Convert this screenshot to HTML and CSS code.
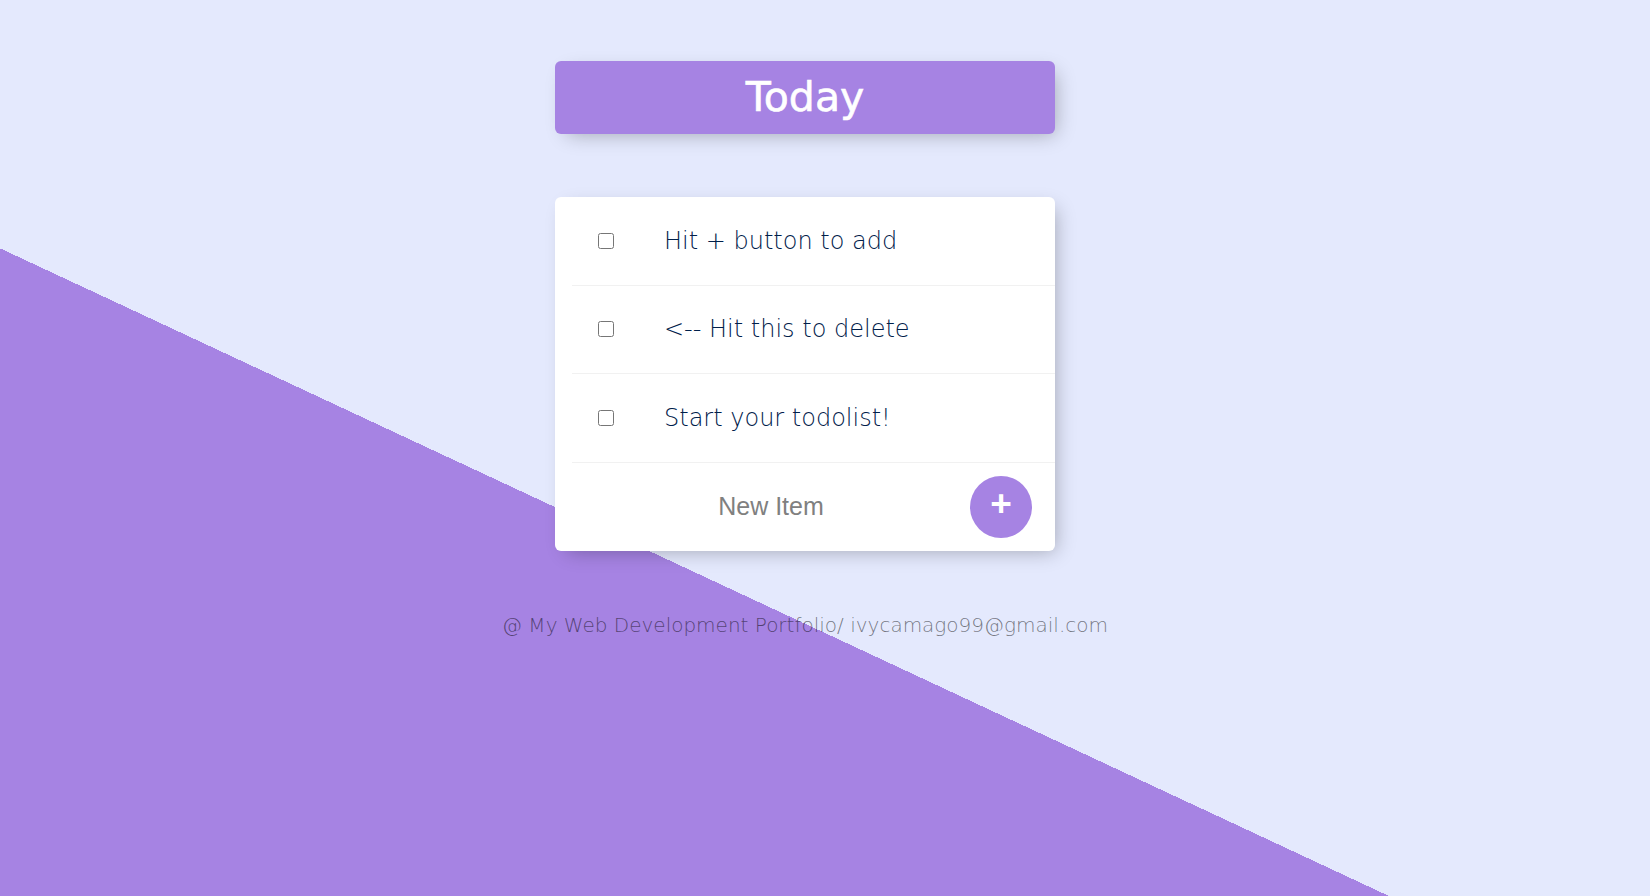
FILE: index.html
```html
<!DOCTYPE html>
<html lang="en">
<head>
<meta charset="utf-8">
<title>To Do List</title>
<link rel="stylesheet" href="styles.css">
</head>
<body>
<div class="page">
  <header class="heading">
    <h1>Today</h1>
  </header>
  <main class="card">
    <div class="item">
      <input type="checkbox" class="check">
      <p class="item-text">Hit + button to add</p>
    </div>
    <div class="item">
      <input type="checkbox" class="check">
      <p class="item-text">&lt;-- Hit this to delete</p>
    </div>
    <div class="item">
      <input type="checkbox" class="check">
      <p class="item-text">Start your todolist!</p>
    </div>
    <form class="item add-row">
      <input type="text" class="new-item" name="newItem" placeholder="New Item" autocomplete="off">
      <button type="submit" class="add-btn">+</button>
    </form>
  </main>
  <footer class="footer">@ My Web Development Portfolio/ ivycamago99@gmail.com</footer>
</div>
</body>
</html>
```
FILE: styles.css
```css
html {
  height: 100%;
  background-color: #E4E9FD;
  background-image: linear-gradient(25deg, #A683E3 50%, #E4E9FD 50%);
  background-repeat: no-repeat;
  background-size: 100% 1266px;
}

body {
  margin: 0;
  font-family: "DejaVu Sans", sans-serif;
}

.page {
  padding-right: 40px;
  padding-top: 61px;
}

.heading {
  width: 500px;
  margin: 0 auto;
  background-color: #A683E3;
  border-radius: 6px;
  box-shadow: 6px 6px 19px -6px rgba(0, 0, 0, 0.3);
}

.heading h1 {
  margin: 0;
  height: 73px;
  line-height: 73px;
  text-align: center;
  color: #ffffff;
  font-family: "DejaVu Sans", sans-serif;
  font-size: 41px;
  font-weight: 500;
  -webkit-text-stroke: 0.6px #ffffff;
}

.card {
  display: block;
  width: 500px;
  margin: 63px auto 0;
  background: #ffffff;
  border-radius: 6px;
  box-shadow: 6px 6px 19px -6px rgba(0, 0, 0, 0.3);
}

.item {
  display: flex;
  align-items: center;
  box-sizing: border-box;
  min-height: 88.5px;
  margin: 0 0 0 17px;
  border-bottom: 1px solid #F1F1F1;
}

.item:last-child {
  border-bottom: 0;
}

.check {
  width: 16px;
  height: 16px;
  margin: 0 25px 0 26px;
  flex: none;
}

.item-text {
  margin: 0;
  padding: 0 25px;
  font-family: "DejaVu Sans", sans-serif;
  font-size: 24px;
  font-weight: 200;
  color: #00204a;
}

.add-row {
  padding-left: 25px;
}

.new-item {
  width: 348px;
  height: 60px;
  padding: 0;
  border: none;
  outline: none;
  background: transparent;
  text-align: center;
  font-family: "Liberation Sans", Arial, sans-serif;
  font-size: 25px;
  color: #333;
}

.new-item::placeholder {
  color: grey;
  opacity: 1;
}

.add-btn {
  width: 62px;
  height: 62px;
  margin-left: 25px;
  padding: 0 0 6px;
  border: 0;
  border-radius: 50%;
  background-color: #A683E3;
  color: #ffffff;
  font-family: "Liberation Sans", Arial, sans-serif;
  font-size: 37px;
  font-weight: bold;
  line-height: 1;
  flex: none;
}

.footer {
  margin-top: 62px;
  text-align: center;
  color: rgba(0, 0, 0, 0.5);
  font-family: "DejaVu Sans", sans-serif;
  font-size: 20px;
  font-weight: 200;
  line-height: 24px;
}
```
